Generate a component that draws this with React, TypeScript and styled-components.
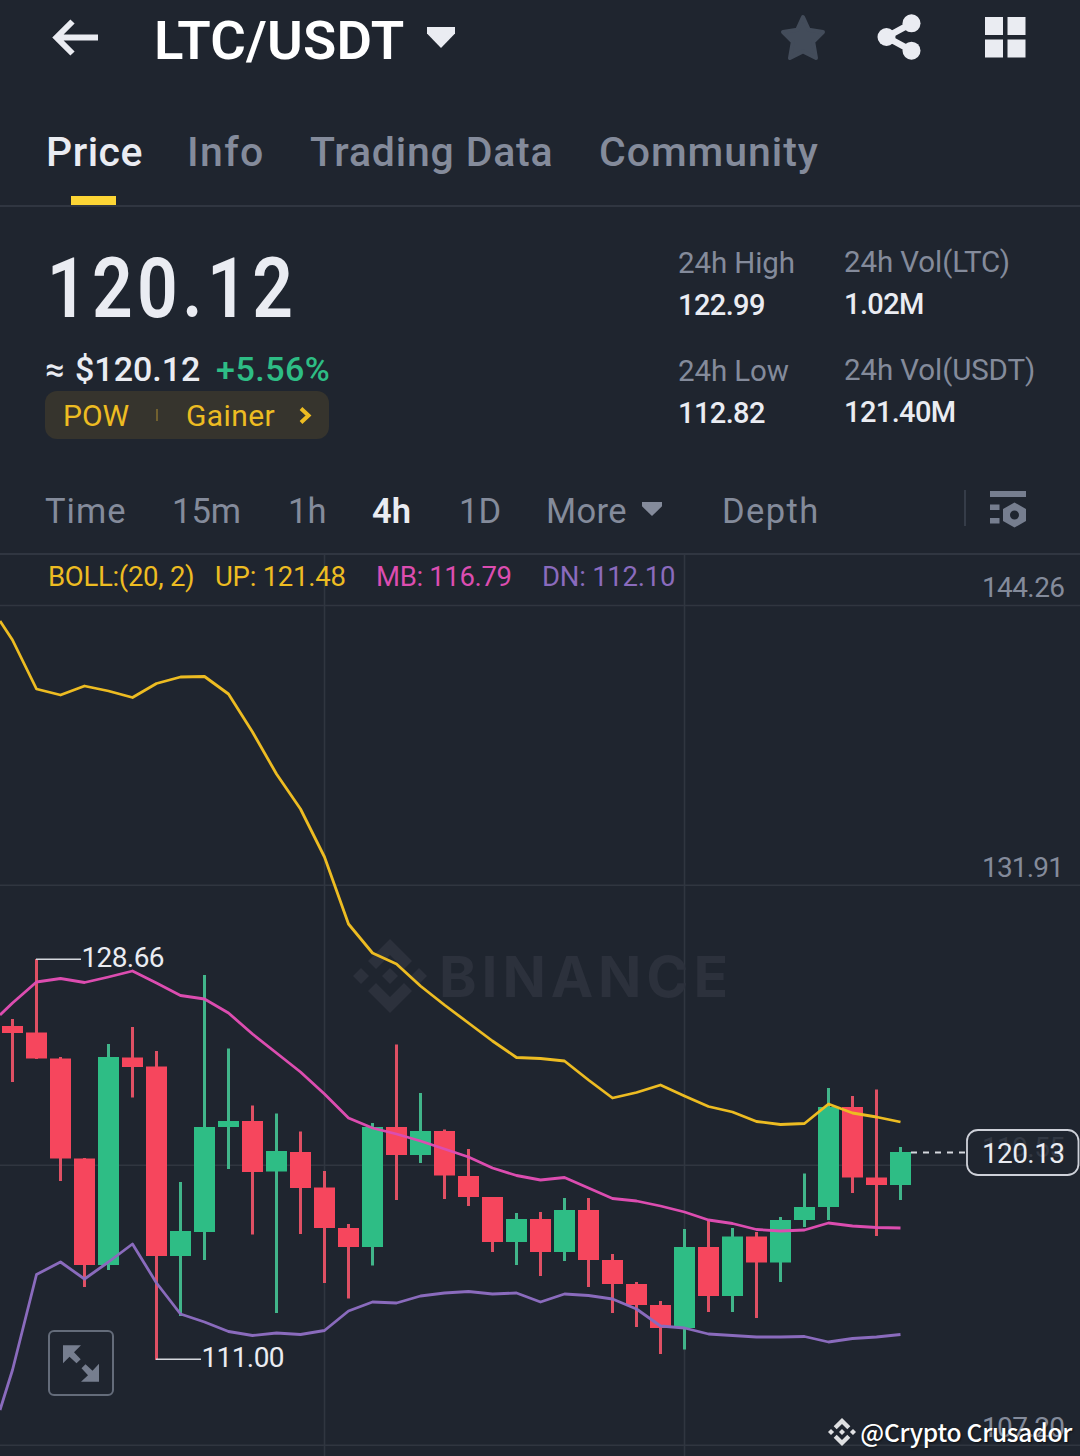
import React from 'react';
import styled, { createGlobalStyle } from 'styled-components';

const c = {
  bg: '#1f252f',
  text: '#eaecf2',
  muted: '#848b9b',
  line: '#303641',
  grid: '#303640',
  green: '#2ebd85',
  red: '#f6465d',
  greenWick: '#41b58a',
  redWick: '#df5064',
  gold: '#edbc22',
  pink: '#dc4db0',
  purple: '#8a6bbd',
};

const GlobalStyle = createGlobalStyle`
  html, body { margin: 0; background: ${c.bg}; }
  * { box-sizing: border-box; }
`;

const Screen = styled.main`
  width: 1080px;
  height: 1456px;
  overflow: hidden;
  background: ${c.bg};
  color: ${c.text};
  font-family: Roboto, 'Liberation Sans', sans-serif;
  display: flex;
  flex-direction: column;
`;

const Label = styled.span<{ $size: number; $weight?: number; $color?: string; $spacing?: number }>`
  font-size: ${(p) => p.$size}px;
  font-weight: ${(p) => p.$weight ?? 400};
  color: ${(p) => p.$color ?? c.text};
  letter-spacing: ${(p) => p.$spacing ?? 0}px;
  white-space: nowrap;
`;

const Header = styled.header`
  height: 74px;
  flex: none;
  display: flex;
  align-items: center;
  padding: 0 54px 0 52px;
`;

const PairButton = styled.div`
  display: flex;
  align-items: center;
  width: 301px;
  margin-left: 56px;
  justify-content: space-between;
`;

const PairName = styled.h1`
  margin: 0;
  padding-top: 6px;
  font-size: 54.5px;
  line-height: 60px;
  font-weight: 600;
  letter-spacing: 0.2px;
  color: #fff;
  white-space: nowrap;
`;

const HeaderActions = styled.div`
  margin-left: auto;
  display: grid;
  grid-template-columns: 97px 108px 41px;
  align-items: center;
`;

const Tabs = styled.nav`
  height: 133px;
  flex: none;
  padding: 25px 0 0 46px;
  border-bottom: 2px solid ${c.line};
  display: grid;
  grid-template-columns: 141px 123px 289px 1fr;
`;

const Tab = styled.div`
  position: relative;
  display: flex;
  align-items: center;
`;

const TabMark = styled.i`
  position: absolute;
  left: 25px;
  bottom: 0;
  width: 45px;
  height: 9px;
  background: #fcd535;
`;

const Summary = styled.section`
  height: 265px;
  flex: none;
  display: flex;
  justify-content: space-between;
  padding: 40px 0 0 45px;
`;

const PriceBlock = styled.div`
  display: flex;
  flex-direction: column;
  align-items: flex-start;
`;

const LastPrice = styled.div`
  font-size: 84px;
  line-height: 84px;
  font-weight: 600;
  letter-spacing: 5.2px;
  padding-left: 2px;
  transform: scaleX(0.85);
  transform-origin: left center;
`;

const FiatRow = styled.div`
  margin-top: 17px;
  height: 42px;
  display: grid;
  grid-template-columns: 30px 141px auto;
  align-items: center;
`;

const Chip = styled.div`
  margin-top: 1px;
  width: 284px;
  height: 48px;
  border-radius: 12px;
  background: #36342d;
  padding: 0 17px 0 18px;
  display: grid;
  grid-template-columns: 93px 30px 1fr 13px;
  align-items: center;
`;

const ChipDivider = styled.i`
  width: 2px;
  height: 12px;
  background: #71602f;
`;

const Stats = styled.div`
  width: 402px;
  padding-top: 34.5px;
  margin-top: -40px;
  display: grid;
  grid-template-columns: 166px 1fr;
`;

const StatColumn = styled.div<{ $lift?: number }>`
  display: flex;
  flex-direction: column;
  gap: 24px;
  margin-top: ${(p) => -(p.$lift ?? 0)}px;
`;

const Stat = styled.div`
  display: grid;
  grid-template-rows: 42px 42px;
  align-items: center;
`;

const Intervals = styled.nav`
  height: 83px;
  flex: none;
  border-bottom: 2px solid ${c.line};
  padding: 0 0 3px 45px;
  display: grid;
  grid-template-columns: 127px 116px 84px 87px 87px 96px 80px 241.500px 26.500px 36px;
  align-items: center;
`;

const IntervalCaret = styled.div`
  margin-top: -5px;
`;

const IntervalDivider = styled.i`
  width: 2px;
  height: 36px;
  margin-top: -6px;
  background: #353c48;
`;

const SettingsIcon = styled.div`
  margin-top: -4px;
`;

const ChartArea = styled.section`
  position: relative;
  flex: 1;
`;

const Legend = styled.div`
  position: absolute;
  left: 48px;
  top: 5px;
  height: 32px;
  display: grid;
  grid-template-columns: 167px 161px 166px auto;
  align-items: center;
`;

const ExpandButton = styled.button`
  position: absolute;
  left: 48px;
  top: 775px;
  width: 66px;
  height: 66px;
  padding: 0;
  border: 2px solid #646c7a;
  border-radius: 6px;
  background: transparent;
  display: grid;
  place-items: center;
`;

const Credit = styled.div`
  position: absolute;
  right: 8px;
  bottom: 6px;
  height: 36px;
  display: flex;
  align-items: center;
  gap: 4px;
  font-family: 'Noto Sans CJK SC', 'Noto Sans', sans-serif;
  font-weight: 500;
  font-size: 24.5px;
  letter-spacing: -0.25px;
  line-height: 36px;
  color: #fff;
  white-space: nowrap;
  text-shadow: 1px 1px 2px rgba(0, 0, 0, 0.6);
`;

const Drawing = styled.svg`
  display: block;
  overflow: visible;
`;

// [body top, body bottom, high, low, rising] in chart pixels
type Candle = [number, number, number, number, 0 | 1];
const candles: Candle[] = [
  [1026, 1033, 1019, 1082, 0], [1032.5, 1058.5, 959, 1059, 0], [1058.5, 1158.5, 1057, 1181, 0],
  [1158.5, 1265, 1158, 1287, 0], [1057, 1265, 1044, 1270, 1], [1057.5, 1067, 1027, 1097.5, 0],
  [1066.5, 1256, 1051, 1360, 0], [1231, 1256, 1182, 1316, 1], [1127, 1232, 975, 1260, 1],
  [1121, 1127, 1048.5, 1169, 1], [1121, 1172, 1105.5, 1234.5, 0], [1151, 1171.5, 1113.5, 1313, 1],
  [1152, 1188, 1131.5, 1234, 0], [1187.5, 1228, 1171, 1283, 0], [1228, 1247, 1224, 1298.5, 0],
  [1127, 1247, 1123, 1265.5, 1], [1127, 1155, 1044.5, 1200, 0], [1131, 1155, 1093, 1163, 1],
  [1131, 1175.5, 1129.5, 1199, 0], [1176, 1197, 1149, 1206, 0], [1197, 1242, 1197, 1252, 0],
  [1219, 1242, 1213, 1265, 1], [1219, 1252, 1212, 1276, 0], [1210, 1252, 1198, 1261, 1],
  [1210, 1260, 1198, 1287, 0], [1260, 1284, 1254, 1313, 0], [1284, 1305, 1282, 1327, 0],
  [1305, 1328, 1301, 1354, 0], [1247, 1328, 1229, 1349.5, 1], [1247, 1296, 1219, 1312, 0],
  [1236.5, 1296, 1228, 1312, 1], [1236.5, 1262.5, 1232, 1318, 0], [1220, 1262.5, 1217, 1282, 1],
  [1207, 1220, 1173.5, 1227, 1], [1107, 1207, 1088, 1220, 1], [1107, 1177.5, 1096, 1193, 0],
  [1177.5, 1185, 1089.5, 1236, 0], [1152, 1185, 1147, 1200, 1],
];

const upper = [
  640, 689, 695, 686, 691, 697.5, 683.5, 677, 676.5, 694, 732, 774, 809, 857, 924, 953, 964, 986, 1005,
  1023, 1041, 1057.5, 1058.5, 1061, 1080, 1098, 1092.5, 1085, 1096, 1106.5, 1112, 1121.5, 1124.5, 1123.5,
  1104, 1113, 1117, 1122,
];
const middle = [
  1003, 982, 978.5, 982.5, 977, 971, 983, 995.5, 999, 1013, 1034, 1053, 1072, 1094, 1118, 1128, 1134, 1141,
  1149, 1157, 1168, 1175.5, 1180, 1177.5, 1188, 1198.5, 1201, 1206, 1212, 1220, 1223.5, 1229.5, 1231, 1230,
  1223, 1226, 1227.5, 1228,
];
const lower = [
  1370, 1274.5, 1262, 1279, 1262, 1244, 1283, 1314, 1322, 1331.5, 1335.5, 1333, 1334.5, 1330.5, 1311, 1302,
  1303, 1296, 1293, 1291.5, 1294, 1293, 1302, 1294, 1295.5, 1299, 1309, 1326, 1328, 1334, 1335.5, 1337, 1337,
  1336.5, 1342, 1338.5, 1337, 1334.5,
];

const slotX = (i: number) => 12.5 + i * 24;
const curve = (start: number, ys: number[]) =>
  `0,${start} ` + ys.map((y, i) => `${slotX(i)},${y}`).join(' ');

function BinanceMark({ size, color }: { size: number; color: string }) {
  return (
    <Drawing width={size} height={size} viewBox="0 0 74 74" fill={color}>
      <path d="M37 0 59 22 51 30 37 16 23 30 15 22Z" />
      <path d="M37 74 59 52 51 44 37 58 23 44 15 52Z" />
      <path d="M8 29 16 37 8 45 0 37Z" />
      <path d="M66 29 74 37 66 45 58 37Z" />
      <path d="M37 29 45 37 37 45 29 37Z" />
    </Drawing>
  );
}

function Caret({ width, height, color }: { width: number; height: number; color: string }) {
  return (
    <Drawing width={width} height={height} viewBox="0 0 28 21" preserveAspectRatio="none">
      <path d="M0 0H28V6.500L14 21 0 6.500Z" fill={color} />
    </Drawing>
  );
}

function AxisText({ x, y, width = 82, fill = c.muted, children }: {
  x: number; y: number; width?: number; fill?: string; children: string;
}) {
  return (
    <text x={x} y={y} fill={fill} fontSize={28} textLength={width} lengthAdjust="spacing">
      {children}
    </text>
  );
}

function CandleChart() {
  return (
    <Drawing width={1080} height={901} viewBox="0 555 1080 901">
      <g stroke={c.grid} strokeWidth={1.6}>
        {[605.5, 885.3, 1165.3, 1445.3].map((y) => (
          <line key={y} x1={0} x2={1080} y1={y} y2={y} />
        ))}
        {[324.5, 684.5].map((x) => (
          <line key={x} x1={x} x2={x} y1={555} y2={1456} />
        ))}
      </g>
      <g transform="translate(353 939)">
        <BinanceMark size={74} color="#2c313c" />
      </g>
      <text x={439} y={997} fontFamily="Inter, sans-serif" fontWeight={700} fontSize={57}
        fill="#2c313c" textLength={289} lengthAdjust="spacing">BINANCE</text>

      <AxisText x={982} y={597} width={83}>144.26</AxisText>
      <AxisText x={982} y={877}>131.91</AxisText>
      <AxisText x={982} y={1437} width={83}>107.20</AxisText>

      {candles.map(([top, bottom, high, low, rising], i) => (
        <g key={i}>
          <rect x={slotX(i) - 1.5} y={high} width={3} height={low - high} fill={rising ? c.greenWick : c.redWick} />
          <rect x={slotX(i) - 10.5} y={top} width={21} height={bottom - top} fill={rising ? c.green : c.red} />
        </g>
      ))}

      <g fill="none" strokeWidth={2.8} strokeLinejoin="round">
        <polyline points={curve(621, upper)} stroke={c.gold} />
        <polyline points={curve(1015, middle)} stroke={c.pink} />
        <polyline points={curve(1410, lower)} stroke={c.purple} />
      </g>

      <line x1={36} x2={81} y1={959.2} y2={959.2} stroke="#d5d8de" strokeWidth={1.6} />
      <AxisText x={81.5} y={967} width={83} fill={c.text}>128.66</AxisText>
      <line x1={156} x2={201} y1={1359.2} y2={1359.2} stroke="#d5d8de" strokeWidth={1.6} />
      <AxisText x={201.5} y={1367} width={83} fill={c.text}>111.00</AxisText>

      <line x1={911} x2={966} y1={1152.5} y2={1152.5} stroke="#d5d8de" strokeWidth={1.8} strokeDasharray="6 6" />
      <rect x={967} y={1130} width={111.5} height={45} rx={11} fill={c.bg} stroke="#ced1d9" strokeWidth={1.8} />
      <AxisText x={982} y={1157} width={83} fill="#323843">119.55</AxisText>
      <AxisText x={982} y={1163} width={83} fill={c.text}>120.13</AxisText>
    </Drawing>
  );
}

const statName = { $size: 29.5, $color: c.muted, $spacing: -0.1 };
const statValue = { $size: 29, $weight: 500, $spacing: -0.6 };
const tabText = { $size: 41, $weight: 500, $color: c.muted };
const intervalText = { $size: 34.5, $color: c.muted };

export default function App() {
  return (
    <Screen>
      <GlobalStyle />
      <Header>
        <Drawing width={46} height={37} viewBox="0 0 46 37" fill="none" stroke={c.text} strokeWidth={6}>
          <path d="M20.5 2.5 4.5 18.5 20.5 34.5M5 18.5H46" />
        </Drawing>
        <PairButton>
          <PairName>LTC/USDT</PairName>
          <Caret width={28} height={21} color={c.text} />
        </PairButton>
        <HeaderActions>
          <Drawing width={46} height={46} viewBox="0 0 46 46">
            <path
              d="M23 3 28.8 15.8 43 18 33.2 27.8 36 44 23 37.5 10 44 12.8 27.8 3 18 17.2 15.8Z"
              fill="#434c5a" stroke="#434c5a" strokeWidth={4} strokeLinejoin="round"
            />
          </Drawing>
          <Drawing width={44} height={46} viewBox="0 0 44 46" fill={c.text}>
            <path d="M34.5 9.3 9.5 23 34.5 36.7" fill="none" stroke={c.text} strokeWidth={6.5} />
            <circle cx={34.5} cy={9.3} r={9} />
            <circle cx={9.5} cy={23} r={9} />
            <circle cx={34.5} cy={36.7} r={9} />
          </Drawing>
          <Drawing width={41} height={41} viewBox="0 0 41 41" fill={c.text}>
            <path d="M0 0H18V18H0ZM22.500 0H40.500V18H22.500ZM0 22.500H18V40.500H0ZM22.500 22.500H40.500V40.500H22.500Z" />
          </Drawing>
        </HeaderActions>
      </Header>

      <Tabs>
        <Tab><Label $size={41} $weight={500} $spacing={0.5}>Price</Label><TabMark /></Tab>
        <Tab><Label {...tabText} $spacing={1.4}>Info</Label></Tab>
        <Tab><Label {...tabText} $spacing={0.8}>Trading Data</Label></Tab>
        <Tab><Label {...tabText} $spacing={0.95}>Community</Label></Tab>
      </Tabs>

      <Summary>
        <PriceBlock>
          <LastPrice>120.12</LastPrice>
          <FiatRow>
            <Label $size={34} $weight={500}>≈</Label>
            <Label $size={34} $weight={500}>$120.12</Label>
            <Label $size={34} $weight={500} $color={c.green} $spacing={0.5}>+5.56%</Label>
          </FiatRow>
          <Chip>
            <Label $size={30} $color={c.gold}>POW</Label>
            <ChipDivider />
            <Label $size={30} $color={c.gold} $spacing={0.4}>Gainer</Label>
            <Drawing width={13} height={17} viewBox="0 0 13 17" fill="none" stroke={c.gold} strokeWidth={4}>
              <path d="M2 1.5 9.5 8.5 2 15.5" />
            </Drawing>
          </Chip>
        </PriceBlock>
        <Stats>
          <StatColumn>
            <Stat><Label {...statName}>24h High</Label><Label {...statValue}>122.99</Label></Stat>
            <Stat><Label {...statName}>24h Low</Label><Label {...statValue}>112.82</Label></Stat>
          </StatColumn>
          <StatColumn $lift={1}>
            <Stat><Label {...statName}>24h Vol(LTC)</Label><Label {...statValue}>1.02M</Label></Stat>
            <Stat><Label {...statName}>24h Vol(USDT)</Label><Label {...statValue}>121.40M</Label></Stat>
          </StatColumn>
        </Stats>
      </Summary>

      <Intervals>
        <Label {...intervalText} $spacing={1}>Time</Label>
        <Label {...intervalText}>15m</Label>
        <Label {...intervalText}>1h</Label>
        <Label $size={34.5} $weight={600}>4h</Label>
        <Label {...intervalText}>1D</Label>
        <Label {...intervalText} $spacing={0.4}>More</Label>
        <IntervalCaret><Caret width={20} height={14} color={c.muted} /></IntervalCaret>
        <Label {...intervalText} $spacing={1.4}>Depth</Label>
        <IntervalDivider />
        <SettingsIcon>
          <Drawing width={36} height={36} viewBox="0 0 36 36" fill="#767e8f">
            <path d="M0 0H36V6H0ZM0 13.5H9.5V19H0ZM0 27H9.5V32.5H0Z" />
            <path fillRule="evenodd" d="M24.5 11.5 36 18V30L24.5 36.5 13 30V18ZM24.5 19.5A4.5 4.5 0 1 0 24.5 28.5 4.5 4.5 0 1 0 24.5 19.5Z" />
          </Drawing>
        </SettingsIcon>
      </Intervals>

      <ChartArea>
        <CandleChart />
        <Legend>
          <Label $size={27.5} $color={c.gold} $spacing={-0.3}>BOLL:(20, 2)</Label>
          <Label $size={27.5} $color={c.gold} $spacing={-0.25}>UP: 121.48</Label>
          <Label $size={27.5} $color={c.pink} $spacing={-0.35}>MB: 116.79</Label>
          <Label $size={27.5} $color={c.purple} $spacing={-0.25}>DN: 112.10</Label>
        </Legend>
        <ExpandButton aria-label="Expand chart">
          <Drawing width={36} height={37} viewBox="0 0 36 36.5" fill="#767e8f">
            <path d="M0 0H18L11 7 17.700 14 13.500 18 6.500 11.500 0 18Z" />
            <path d="M36 36.500H18L25 30 18.500 23 22.500 19 29.500 25.500 36 18.500Z" />
          </Drawing>
        </ExpandButton>
        <Credit>
          <BinanceMark size={28} color="#dfe0e2" />
          @Crypto Crusador
        </Credit>
      </ChartArea>
    </Screen>
  );
}
